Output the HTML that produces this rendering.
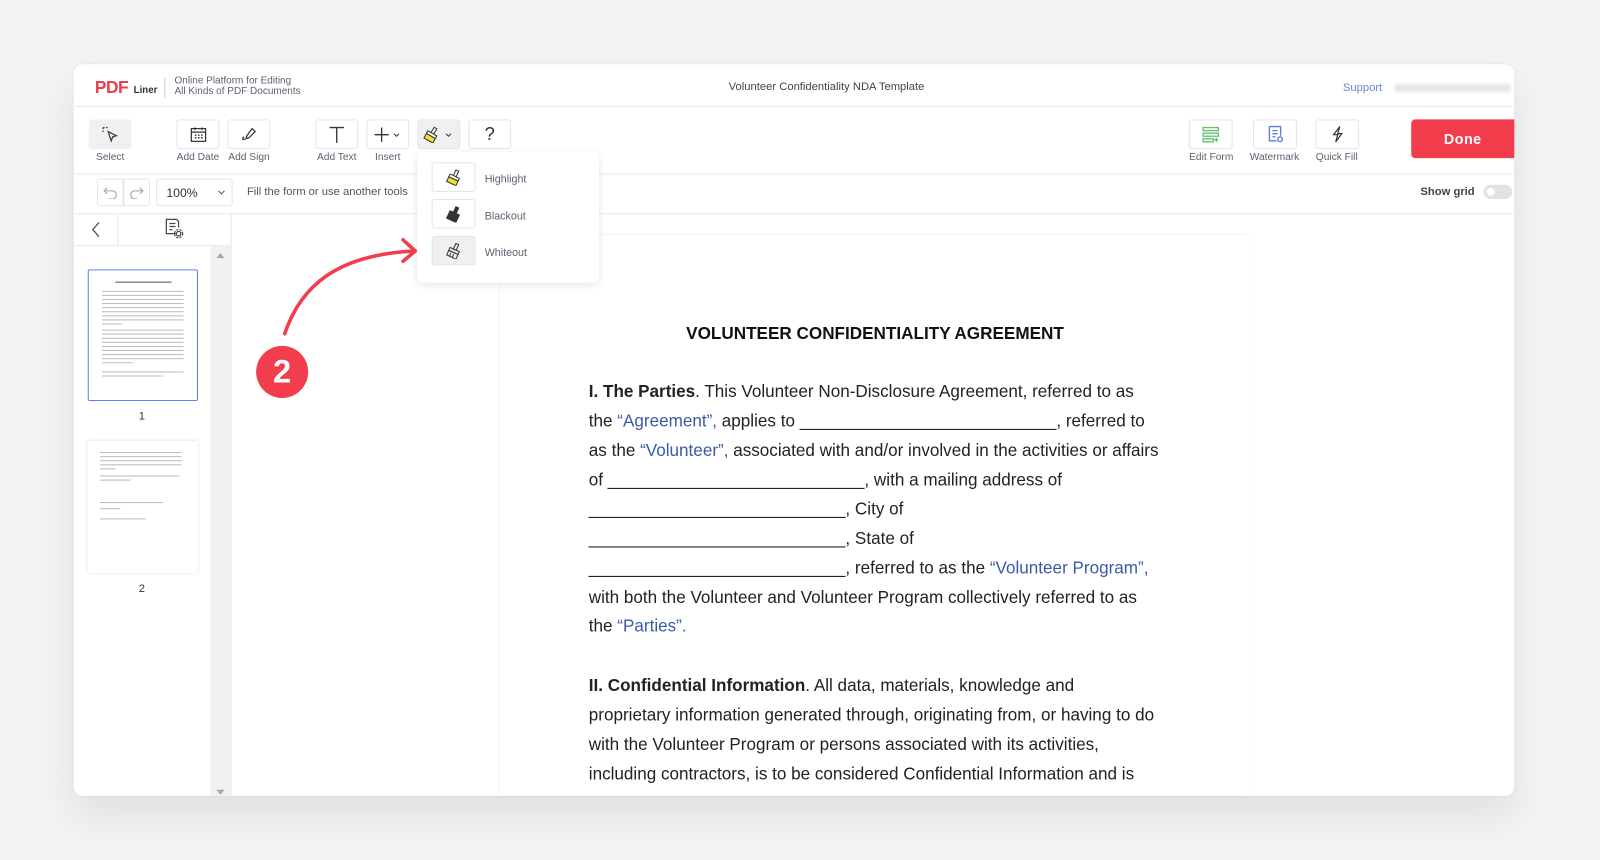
<!DOCTYPE html>
<html><head><meta charset="utf-8"><style>
*{box-sizing:border-box;margin:0;padding:0}
html,body{width:1600px;height:860px;overflow:hidden;background:#f2f3f5;font-family:"Liberation Sans",sans-serif}
#w{position:absolute;left:0;top:0;width:1568px;height:843px;transform:scale(1.020408);transform-origin:0 0}
.a{position:absolute}
.card{left:72px;top:63px;width:1412px;height:717px;background:#fff;border-radius:9px;box-shadow:0 20px 40px rgba(0,0,0,.08),0 0 2px rgba(0,0,0,.08);overflow:hidden}
.hl{background:#e6e8eb;height:1px}
.btn{position:absolute;height:29px;border:1px solid #e3e5e8;border-radius:3px;background:#fff;display:flex;align-items:center;justify-content:center}
.lbl{position:absolute;font-size:10px;color:#5b6270;text-align:center;white-space:nowrap}
.doc{font-family:"Liberation Sans",Arial,sans-serif;font-size:16.75px;color:#222;white-space:nowrap;position:absolute;left:577px}
.b{color:#3a5aa8}
.mi{position:absolute;left:423px;width:43px;height:29px;border:1px solid #e3e5e8;border-radius:3px;background:#fff;display:flex;align-items:center;justify-content:center}
.mt{position:absolute;left:475px;font-size:10.5px;color:#5b6270}
.tl{position:absolute;height:1.2px;background:#b9bcc2}
</style></head><body><div id="w">
<div class="a card"></div>
<!-- header -->
<div class="a" style="left:93px;top:76px;font-weight:bold;font-size:17px;color:#ef3c4b;letter-spacing:-0.5px">PDF</div>
<div class="a" style="left:131px;top:83px;font-weight:bold;font-size:9.5px;color:#333">Liner</div>
<div class="a" style="left:161px;top:76px;width:1px;height:20px;background:#ccc"></div>
<div class="a" style="left:171px;top:75px;font-size:9.8px;color:#5b6270;line-height:10px">Online Platform for Editing<br>All Kinds of PDF Documents</div>
<div class="a" style="left:600px;width:420px;top:79px;text-align:center;font-size:11px;color:#444">Volunteer Confidentiality NDA Template</div>
<div class="a" style="left:1316px;top:80px;font-size:11px;color:#6a84d8">Support</div>
<div class="a" style="left:1366px;top:82px;width:115px;height:8px;background:#e4e6ea;border-radius:4px;filter:blur(1.5px)"></div>
<div class="a hl" style="left:73px;top:104px;width:1410px"></div>
<!-- toolbar -->
<div class="btn" style="left:87px;top:117px;width:42px;background:#eef0f2;border-color:#eef0f2"><svg width="16" height="16" viewBox="0 0 16 16" fill="none" stroke="#333" stroke-width="1.2"><path d="M1 1h6M1 1v6" stroke-dasharray="1.5 1.5"/><path d="M6 5l8 4-3.5 1-1.5 4z"/></svg></div>
<div class="lbl" style="left:87px;width:42px;top:149px">Select</div>
<div class="btn" style="left:173px;top:117px;width:42px"><svg width="17" height="16" viewBox="0 0 17 16" fill="none" stroke="#333" stroke-width="1.2"><rect x="1.5" y="2" width="14" height="12.5"/><path d="M1.5 5.5h14M5 1v2.5M12 1v2.5"/><path d="M5 8.5h1.5M8 8.5h1.5M11 8.5h1.5M5 11h1.5M8 11h1.5M11 11h1.5" stroke-width="1.4"/></svg></div>
<div class="lbl" style="left:170px;width:48px;top:149px">Add Date</div>
<div class="btn" style="left:223px;top:117px;width:42px"><svg width="16" height="16" viewBox="0 0 16 16" fill="none" stroke="#333" stroke-width="1.2"><path d="M11 2l3 3-6 6-3 1 1-3z"/><path d="M4 12c-2 2-3 0-1-2"/></svg></div>
<div class="lbl" style="left:220px;width:48px;top:149px">Add Sign</div>
<div class="btn" style="left:309px;top:117px;width:42px"><svg width="16" height="18" viewBox="0 0 16 18" fill="none" stroke="#333" stroke-width="1.3"><path d="M1 2h14M8 2v15"/></svg></div>
<div class="lbl" style="left:306px;width:48px;top:149px">Add Text</div>
<div class="btn" style="left:359px;top:117px;width:42px"><svg width="28" height="16" viewBox="0 0 28 16" fill="none" stroke="#333" stroke-width="1.3"><path d="M8 1v14M1 8h14"/><path d="M20 7l2.5 2.5L25 7" stroke-width="1"/></svg></div>
<div class="lbl" style="left:356px;width:48px;top:149px">Insert</div>
<div class="btn" style="left:409px;top:117px;width:42px;background:#eef0f2"><svg width="30" height="16" viewBox="0 0 30 16"><g transform="rotate(30 8 8)"><rect x="6.5" y="0.5" width="3" height="6" fill="#fff" stroke="#333"/><rect x="3" y="6.5" width="10" height="3" fill="#fff" stroke="#333"/><path d="M3 9.5h10v5H3z" fill="#f1df2e" stroke="#333"/></g><path d="M22 7l2.5 2.5L27 7" fill="none" stroke="#333"/></svg></div>
<div class="btn" style="left:459px;top:117px;width:42px;font-size:18px;color:#333">?</div>
<div class="btn" style="left:1165px;top:117px;width:43px"><svg width="17" height="16" viewBox="0 0 17 16" fill="none" stroke="#5cc36a" stroke-width="1.3"><rect x="1" y="1" width="15" height="3"/><rect x="1" y="6.5" width="15" height="3"/><rect x="1" y="12" width="10" height="3"/><path d="M14 11v4M12 13h4"/></svg></div>
<div class="lbl" style="left:1160px;width:54px;top:149px">Edit Form</div>
<div class="btn" style="left:1228px;top:117px;width:43px"><svg width="16" height="17" viewBox="0 0 16 17" fill="none" stroke="#5a7be0" stroke-width="1.3"><path d="M2 1h11v9M2 1v14h7"/><path d="M5 5h5M5 8h5M5 11h3"/><circle cx="12.5" cy="13.5" r="2.3"/></svg></div>
<div class="lbl" style="left:1220px;width:58px;top:149px">Watermark</div>
<div class="btn" style="left:1289px;top:117px;width:43px"><svg width="14" height="17" viewBox="0 0 14 17" fill="none" stroke="#333" stroke-width="1.2"><path d="M9 1L3 9h4l-2 7 6-8H7z"/></svg></div>
<div class="lbl" style="left:1282px;width:56px;top:149px">Quick Fill</div>
<div class="a" style="left:1383px;top:117px;width:101px;height:38px;background:#f23d4d;border-radius:4px 0 0 4px;color:#fff;font-weight:bold;font-size:14px;display:flex;align-items:center;justify-content:center;letter-spacing:.5px">Done</div>
<div class="a hl" style="left:73px;top:170px;width:1410px"></div>
<!-- subtoolbar -->
<div class="btn" style="left:95px;top:175px;width:26px;height:27px;border-radius:3px 0 0 3px"><svg width="14" height="12" viewBox="0 0 14 12" fill="none" stroke="#aaa" stroke-width="1.2"><path d="M4 1L1 4l3 3M1 4h8a4 4 0 010 8H6"/></svg></div>
<div class="btn" style="left:121px;top:175px;width:26px;height:27px;border-radius:0 3px 3px 0"><svg width="14" height="12" viewBox="0 0 14 12" fill="none" stroke="#aaa" stroke-width="1.2"><path d="M10 1l3 3-3 3M13 4H5a4 4 0 000 8h3"/></svg></div>
<div class="btn" style="left:153px;top:175px;width:75px;height:27px;justify-content:space-between;padding:0 6px 0 9px;font-size:12px;color:#333">100%<svg width="8" height="5" viewBox="0 0 8 5" fill="none" stroke="#555"><path d="M1 1l3 3 3-3"/></svg></div>
<div class="a" style="left:242px;top:182px;font-size:11px;color:#555">Fill the form or use another tools</div>
<div class="a" style="left:1392px;top:182px;font-size:11px;color:#444;font-weight:bold">Show grid</div>
<div class="a" style="left:1454px;top:181px;width:28px;height:14px;border-radius:7px;background:#dfe2e7"><div class="a" style="left:3px;top:3px;width:8px;height:8px;border-radius:50%;background:#fff"></div></div>
<div class="a hl" style="left:73px;top:209px;width:1410px"></div>
<!-- sidebar -->
<div class="a" style="left:226px;top:209px;width:1px;height:571px;background:#e6e8eb"></div>
<div class="a" style="left:115px;top:209px;width:1px;height:31px;background:#e6e8eb"></div>
<div class="a hl" style="left:73px;top:240px;width:153px"></div>
<svg class="a" style="left:89px;top:217px" width="10" height="16" viewBox="0 0 10 16" fill="none" stroke="#555" stroke-width="1.3"><path d="M8 1L2 8l6 7"/></svg>
<svg class="a" style="left:161px;top:214px" width="19" height="20" viewBox="0 0 19 20" fill="none" stroke="#444" stroke-width="1.2"><path d="M11 15H2V1h10l2 2v6"/><path d="M5 5h6M5 8h6M5 11h3"/><circle cx="14" cy="15" r="2.2"/><circle cx="14" cy="15" r="4" stroke-dasharray="2 1.3"/></svg>
<div class="a" style="left:206px;top:240px;width:20px;height:540px;background:#f0f1f2"></div>
<div class="a" style="left:212px;top:248px;width:0;height:0;border:4px solid transparent;border-bottom:5px solid #aaa;border-top:0"></div>
<div class="a" style="left:212px;top:774px;width:0;height:0;border:4px solid transparent;border-top:5px solid #aaa;border-bottom:0"></div>
<div class="a" style="left:86px;top:264px;width:108px;height:129px;border:1.5px solid #5b86e6;background:#fff;border-radius:2px"></div>
<div class="a" style="left:136px;top:402px;font-size:11px;color:#333">1</div>
<div class="a" style="left:86px;top:432px;width:108px;height:130px;background:#fff;box-shadow:0 0 3px rgba(0,0,0,.12);border-radius:2px"></div>
<div id="t1"></div>
<div class="a" style="left:136px;top:571px;font-size:11px;color:#333">2</div>
<!-- page -->
<div class="a" style="left:490px;top:230px;width:735px;height:550px;background:#fff;box-shadow:0 0 3px rgba(0,0,0,.08)"></div>
<div class="a" style="left:490px;width:735px;top:317px;text-align:center;font-weight:bold;font-size:16.8px;color:#111">VOLUNTEER CONFIDENTIALITY AGREEMENT</div>
<div class="doc" style="top:374px"><b>I. The Parties</b>. This Volunteer Non-Disclosure Agreement, referred to as</div>
<div class="doc" style="top:403px">the <span class="b">“Agreement”,</span> applies to ___________________________, referred to</div>
<div class="doc" style="top:432px">as the <span class="b">“Volunteer”,</span> associated with and/or involved in the activities or affairs</div>
<div class="doc" style="top:461px">of ___________________________, with a mailing address of</div>
<div class="doc" style="top:489px">___________________________, City of</div>
<div class="doc" style="top:518px">___________________________, State of</div>
<div class="doc" style="top:547px">___________________________, referred to as the <span class="b">“Volunteer Program”,</span></div>
<div class="doc" style="top:576px">with both the Volunteer and Volunteer Program collectively referred to as</div>
<div class="doc" style="top:604px">the <span class="b">“Parties”.</span></div>
<div class="doc" style="top:662px"><b>II. Confidential Information</b>. All data, materials, knowledge and</div>
<div class="doc" style="top:691px">proprietary information generated through, originating from, or having to do</div>
<div class="doc" style="top:720px">with the Volunteer Program or persons associated with its activities,</div>
<div class="doc" style="top:749px">including contractors, is to be considered Confidential Information and is</div>
<!-- dropdown -->
<div class="a" style="left:409px;top:149px;width:178px;height:128px;background:#fff;border-radius:4px;box-shadow:0 2px 8px rgba(0,0,0,.1)"></div>
<div class="mi" style="top:159px"><svg width="16" height="16" viewBox="0 0 16 16"><g transform="rotate(25 8 8)"><rect x="6.5" y="0.5" width="3" height="6" fill="#fff" stroke="#333"/><rect x="3" y="6.5" width="10" height="3" fill="#fff" stroke="#333"/><path d="M3 9.5h10v5H3z" fill="#f1df2e" stroke="#333"/></g></svg></div>
<div class="mt" style="top:170px">Highlight</div>
<div class="mi" style="top:195px"><svg width="16" height="16" viewBox="0 0 16 16"><g transform="rotate(25 8 8)"><rect x="6.5" y="0.5" width="3" height="6" fill="#333" stroke="#333"/><path d="M3 6.5h10v8H3z" fill="#333" stroke="#333"/></g></svg></div>
<div class="mt" style="top:206px">Blackout</div>
<div class="mi" style="top:231px;background:#eef0f2"><svg width="16" height="16" viewBox="0 0 16 16"><g transform="rotate(25 8 8)" fill="none" stroke="#333"><rect x="6.5" y="0.5" width="3" height="6"/><rect x="3" y="6.5" width="10" height="3"/><path d="M3 9.5h10v5H3zM6 11v3.5M9 11v3.5"/></g></svg></div>
<div class="mt" style="top:242px">Whiteout</div>
<!-- arrow -->
<svg class="a" style="left:270px;top:230px" width="150" height="110" viewBox="0 0 150 110" fill="none" stroke="#f23d4d" stroke-width="3.5" stroke-linecap="round" stroke-linejoin="round"><path d="M9 97C25 50 60 20 135 16"/><path d="M125 5l12 11-12 10"/></svg>
<div class="a" style="left:251px;top:339px;width:51px;height:51px;border-radius:50%;background:#f23d4d;color:#fff;font-weight:bold;font-size:32px;display:flex;align-items:center;justify-content:center">2</div>
</div>
<script>
(function(){var h='';function L(x,y,w,c){h+='<div class="tl" style="left:'+x+'px;top:'+y+'px;width:'+w+'px;'+(c?'background:'+c:'')+'"></div>';}
L(113,276,55,'#555');var ys=[285,289,293,297,301,305,309,313,317],i;for(i=0;i<ys.length;i++)L(100,ys[i],i==8?20:80);
var y2=[323,327,331,335,339,343,347,351,355];for(i=0;i<y2.length;i++)L(100,y2[i],i==8?30:80);L(100,364,80);L(100,368,60);
var y3=[443,447,451,455];for(i=0;i<4;i++)L(98,y3[i],80);L(98,459,15);L(98,466,78);L(98,470,30);L(98,492,62);L(98,498,20);L(98,508,45);
document.getElementById('t1').outerHTML=h;})();
</script>
</body></html>
